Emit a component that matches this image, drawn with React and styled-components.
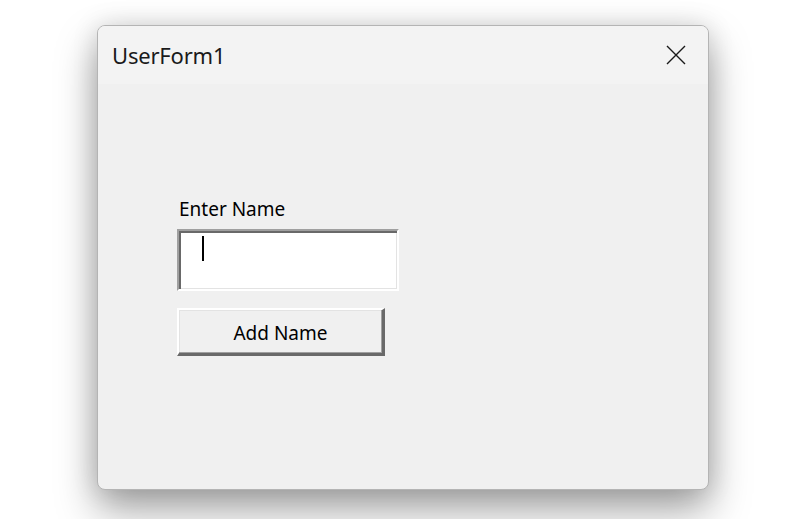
import React from 'react';
import styled, { createGlobalStyle } from 'styled-components';

const GlobalStyle = createGlobalStyle`
  * {
    box-sizing: border-box;
  }
  body {
    margin: 0;
    background: #ffffff;
    font-family: "Noto Sans", "Open Sans", sans-serif;
    overflow: hidden;
  }
`;

const Desktop = styled.div`
  width: 788px;
  height: 519px;
  padding: 25px 0 0 97px;
`;

const Window = styled.div`
  display: flex;
  flex-direction: column;
  width: 612px;
  height: 465px;
  border: 1px solid #b4b4b4;
  border-radius: 8px;
  overflow: hidden;
  background: #f0f0f0;
  box-shadow: 0 20px 40px rgba(0, 0, 0, 0.36), 0 0 26px rgba(0, 0, 0, 0.13);
`;

const TitleBar = styled.div`
  display: flex;
  align-items: center;
  justify-content: space-between;
  height: 58px;
  padding: 0 20px 0 14px;
  background: #f3f3f3;
`;

const Title = styled.span`
  color: #1a1a1a;
  font-size: 22px;
  letter-spacing: -0.2px;
`;

const CloseButton = styled.div`
  display: flex;
  align-items: center;
  justify-content: center;
  width: 24px;
  height: 24px;
`;

const Body = styled.div`
  display: flex;
  flex-direction: column;
  align-items: flex-start;
  padding: 113px 0 0 79px;
`;

const Label = styled.label`
  color: #000;
  font-size: 19px;
  line-height: 24px;
  margin-bottom: 8px;
  padding-left: 2px;
`;

const TextBox = styled.div`
  position: relative;
  width: 222px;
  height: 62px;
  background: #fff;
  border-style: solid;
  border-width: 2px;
  border-color: #a0a0a0 #fff #fff #a0a0a0;
  box-shadow: inset 2px 2px 0 #696969, inset -1px -1px 0 #e3e3e3;
`;

const Caret = styled.span`
  position: absolute;
  left: 23px;
  top: 5px;
  width: 1.5px;
  height: 25px;
  background: #000;
`;

const Button = styled.button`
  width: 208px;
  height: 48px;
  margin-top: 17px;
  padding: 2px 0 0;
  background: #f0f0f0;
  border-style: solid;
  border-width: 2px 3px 3px 2px;
  border-color: #fff #696969 #696969 #fff;
  box-shadow: inset -1px -1px 0 #a0a0a0, inset 1px 1px 0 #e3e3e3;
  font-family: inherit;
  font-size: 19px;
  color: #000;
`;

const CloseIcon = () => (
  <svg width="20" height="20" viewBox="0 0 20 20">
    <path d="M1 1 L19 19 M19 1 L1 19" stroke="#1a1a1a" strokeWidth="1.4" fill="none" />
  </svg>
);

export default function App() {
  return (
    <Desktop>
      <GlobalStyle />
      <Window>
        <TitleBar>
          <Title>UserForm1</Title>
          <CloseButton>
            <CloseIcon />
          </CloseButton>
        </TitleBar>
        <Body>
          <Label>Enter Name</Label>
          <TextBox>
            <Caret />
          </TextBox>
          <Button>Add Name</Button>
        </Body>
      </Window>
    </Desktop>
  );
}
